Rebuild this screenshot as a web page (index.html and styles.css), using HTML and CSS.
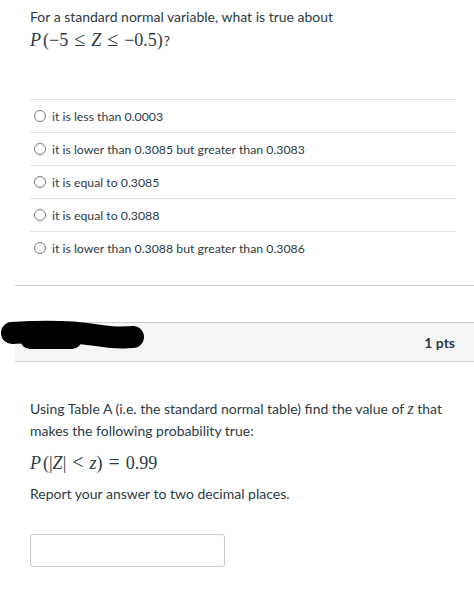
FILE: index.html
```html
<!DOCTYPE html>
<html>
<head>
<meta charset="utf-8">
<link rel="stylesheet" href="styles.css">
</head>
<body>
<div class="q1">
  <p class="qtext">For a standard normal variable, what is true about</p>
  <p class="math m1"><i>P</i><span class="po">(</span>−5<span class="rel">≤</span><i>Z</i><span class="rel">≤</span>−0.5)<span class="qm">?</span></p>
  <ul class="options">
    <li class="opt"><span class="radio"></span>it is less than 0.0003</li>
    <li class="opt"><span class="radio"></span>it is lower than 0.3085 but greater than 0.3083</li>
    <li class="opt"><span class="radio"></span>it is equal to 0.3085</li>
    <li class="opt"><span class="radio"></span>it is equal to 0.3088</li>
    <li class="opt"><span class="radio"></span>it is lower than 0.3088 but greater than 0.3086</li>
  </ul>
</div>
<div class="sep"></div>
<div class="q2">
  <div class="header">
    <svg class="scribble" width="150" height="40" viewBox="0 0 150 40">
      <path d="M12 15 C 40 13, 70 13, 95 17 S 125 19, 133 19" stroke="#000" stroke-width="22" stroke-linecap="round" fill="none"/>
      <path d="M30 21 L 72 21" stroke="#000" stroke-width="20" stroke-linecap="round" fill="none"/>
    </svg>
    <span class="pts">1 pts</span>
  </div>
  <div class="body">
    <p class="text">Using Table A (i.e. the standard normal table) find the value of <i class="mi">z</i> that makes the following probability true:</p>
    <p class="math m2"><i>P</i><span class="po">(</span>|<i>Z</i>|<span class="rel">&lt;</span><i>z</i>)<span class="rel">=</span>0.99</p>
    <p class="text">Report your answer to two decimal places.</p>
    <div class="input"></div>
  </div>
</div>
</body>
</html>
```
FILE: styles.css
```css
* { box-sizing: border-box; }
body {
  margin: 0;
  background: #fff;
  font-family: Lato, "Open Sans", sans-serif;
  color: #2d3b45;
  width: 474px;
  overflow: hidden;
}
p { margin: 0; }
.q1 {
  padding: 7px 18px 0 30px;
}
.qtext {
  font-size: 14px;
  line-height: 20px;
}
.math {
  font-family: "Liberation Serif", "DejaVu Serif", serif;
  font-size: 18px;
  line-height: 22px;
  color: #2d3b45;
}
.math i, .mi {
  font-family: "Liberation Serif", serif;
  font-style: italic;
}
.mi { font-size: 16px; }
.po { margin-left: 2px; }
.rel { margin: 0 6px; font-size: 20px; }
.qm { font-family: Lato, sans-serif; font-size: 14px; margin-left: 1px; }
.m1 { margin-top: 1px; }
.options {
  list-style: none;
  margin: 47px 0 0 0;
  padding: 0;
}
.opt {
  height: 33px;
  border-top: 1px solid #e3e3e3;
  display: flex;
  align-items: center;
  font-size: 12.3px;
  padding-left: 4px;
  gap: 6px;
}
.radio {
  width: 12px;
  height: 12px;
  border: 1px solid #7a7a7a;
  border-radius: 50%;
  flex: none;
}
.sep {
  margin: 21px 0 0 15px;
  border-top: 1px solid #c7cdd1;
}
.q2 {
  margin-top: 36px;
}
.header {
  position: relative;
  margin-left: 15px;
  height: 40px;
  background: #f5f5f5;
  border-top: 1px solid #c7cdd1;
  border-bottom: 1px solid #c7cdd1;
  display: flex;
  align-items: center;
  justify-content: flex-end;
  padding-right: 19px;
}
.scribble {
  position: absolute;
  left: -15px;
  top: -5px;
}
.pts {
  font-weight: 700;
  font-size: 14px;
  color: #2d3b45;
}
.body {
  padding: 36px 18px 0 30px;
}
.text {
  font-size: 14px;
  line-height: 22px;
}
.m2 {
  margin: 9px 0 9px;
}
.input {
  margin-top: 29px;
  width: 195px;
  height: 33px;
  border: 1px solid #c8c8c8;
  border-radius: 3px;
  background: #fff;
}
```
